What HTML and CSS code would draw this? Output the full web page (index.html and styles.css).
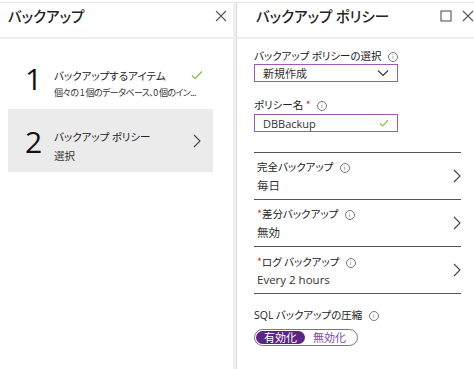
FILE: index.html
```html
<!DOCTYPE html>
<html lang="ja">
<head>
    <meta charset="UTF-8">
    <title>バックアップ</title>
    <link rel="stylesheet" href="styles.css">
</head>
<body>
    <div class="blade blade-left">
        <div class="blade-header">
            <span class="blade-title">バックアップ</span>
            <span class="header-icons">
                <svg width="12" height="12" viewBox="0 0 12 12"><path d="M1 1L11 11M11 1L1 11" stroke="#555" stroke-width="1.1" fill="none"/></svg>
            </span>
        </div>
        <div class="steps">
            <div class="step">
                <div class="step-num">1</div>
                <div class="step-text">
                    <div class="step-title">バックアップするアイテム</div>
                    <div class="step-sub long">個々の 1 個のデータベース、0 個のイン...</div>
                </div>
                <svg class="step-icon check" width="12" height="10" viewBox="0 0 12 10"><path d="M1 5.5L4.2 8.5L11 1.5" stroke="#7fba3a" stroke-width="1.1" fill="none"/></svg>
            </div>
            <div class="step active">
                <div class="step-num">2</div>
                <div class="step-text">
                    <div class="step-title">バックアップ ポリシー</div>
                    <div class="step-sub">選択</div>
                </div>
                <svg class="step-icon" width="8" height="14" viewBox="0 0 8 14"><path d="M1 1L7 7L1 13" stroke="#444" stroke-width="1.1" fill="none"/></svg>
            </div>
        </div>
    </div>
    <div class="gutter"></div>
    <div class="blade blade-right">
        <div class="blade-header">
            <span class="blade-title">バックアップ ポリシー</span>
            <span class="header-icons">
                <svg width="12" height="12" viewBox="0 0 12 12"><rect x="1" y="1" width="10" height="10" stroke="#555" stroke-width="1.1" fill="none"/></svg>
                <svg width="12" height="12" viewBox="0 0 12 12"><path d="M1 1L11 11M11 1L1 11" stroke="#555" stroke-width="1.1" fill="none"/></svg>
            </span>
        </div>
        <div class="form">
            <div class="field">
                <div class="label">バックアップ ポリシーの選択 <span class="info">i</span></div>
                <div class="box">
                    <span>新規作成</span>
                    <svg width="12" height="8" viewBox="0 0 12 8"><path d="M1 1.5L6 6.5L11 1.5" stroke="#333" stroke-width="1.1" fill="none"/></svg>
                </div>
            </div>
            <div class="field">
                <div class="label">ポリシー名 <span class="req">*</span> <span class="info">i</span></div>
                <div class="box">
                    <span class="latin">DBBackup</span>
                    <svg width="10" height="8" viewBox="0 0 10 8"><path d="M1 4.5L3.7 7L9 1.2" stroke="#7fba3a" stroke-width="1.1" fill="none"/></svg>
                </div>
            </div>
            <div class="rows">
                <div class="row">
                    <div>
                        <div class="row-title">完全バックアップ <span class="info">i</span></div>
                        <div class="row-value">毎日</div>
                    </div>
                    <svg width="8" height="14" viewBox="0 0 8 14"><path d="M1 1L7 7L1 13" stroke="#444" stroke-width="1.1" fill="none"/></svg>
                </div>
                <div class="row">
                    <div>
                        <div class="row-title"><span class="req">*</span>差分バックアップ <span class="info">i</span></div>
                        <div class="row-value">無効</div>
                    </div>
                    <svg width="8" height="14" viewBox="0 0 8 14"><path d="M1 1L7 7L1 13" stroke="#444" stroke-width="1.1" fill="none"/></svg>
                </div>
                <div class="row">
                    <div>
                        <div class="row-title"><span class="req">*</span>ログ バックアップ <span class="info">i</span></div>
                        <div class="row-value latin">Every 2 hours</div>
                    </div>
                    <svg width="8" height="14" viewBox="0 0 8 14"><path d="M1 1L7 7L1 13" stroke="#444" stroke-width="1.1" fill="none"/></svg>
                </div>
            </div>
            <div class="field compress">
                <div class="label"><span class="latin">SQL</span> バックアップの圧縮 <span class="info">i</span></div>
                <div class="toggle">
                    <span class="opt on">有効化</span>
                    <span class="opt">無効化</span>
                </div>
            </div>
        </div>
    </div>
</body>
</html>
```

FILE: styles.css
```css
body {
    margin: 0;
    padding-top: 2px;
    height: 367px;
    display: flex;
    font-family: "Noto Sans CJK JP", "Noto Sans", sans-serif;
    font-feature-settings: "palt";
    color: #222;
    background-color: #fff;
    overflow: hidden;
}
.latin {
    font-family: "Open Sans", "Noto Sans", sans-serif;
}
.blade {
    border-top: 1px solid #e2e2e2;
}
.blade-left {
    width: 233px;
}
.gutter {
    width: 3px;
    background-color: #efefef;
}
.blade-right {
    flex: 1;
    border-left: 1px solid #dcdcdc;
}
.blade-header {
    height: 32px;
    display: flex;
    align-items: flex-start;
    justify-content: space-between;
    padding: 2px 6px 0 8px;
    border-bottom: 2px solid #ececec;
}
.blade-right .blade-header {
    padding-left: 19px;
    padding-right: 0;
}
.blade-title {
    font-size: 14.5px;
    line-height: 22px;
    font-weight: 500;
}
.header-icons {
    display: flex;
    gap: 10px;
    align-items: center;
    height: 22px;
}
.header-icons svg {
    display: block;
}
.steps {
    padding-top: 7px;
}
.step {
    display: flex;
    align-items: center;
    height: 63px;
    margin: 0 20px 0 8px;
}
.step.active {
    background-color: #ebebeb;
}
.step-num {
    width: 46px;
    padding-left: 17px;
    padding-top: 2px;
    box-sizing: border-box;
    font-family: "Open Sans", sans-serif;
    font-size: 30px;
    line-height: 1;
    color: #111;
}
.step-text {
    flex: 1;
    min-width: 0;
    font-size: 10.5px;
    padding-top: 11px;
}
.step-title {
    margin-bottom: 3px;
}
.step.active .step-title {
    margin-bottom: 4px;
}
.step-sub {
    color: #333;
    white-space: nowrap;
}
.step-sub.long {
    font-size: 9px;
    letter-spacing: -0.6px;
}
.step-icon {
    margin-right: 12px;
    margin-left: 4px;
}
.step-icon.check {
    align-self: flex-start;
    margin-top: 24px;
    margin-left: -16px;
    margin-right: 10px;
}
.form {
    padding: 9px 0 0 17px;
    width: 207px;
}
.field {
    margin-bottom: 15px;
}
.label {
    font-size: 10.5px;
    height: 16px;
    line-height: 16px;
    color: #222;
}
.info {
    display: inline-block;
    width: 8px;
    height: 8px;
    border: 1px solid #777;
    border-radius: 50%;
    font-size: 6px;
    line-height: 8px;
    text-align: center;
    color: #777;
    margin-left: 4px;
    vertical-align: 1px;
    font-family: "DejaVu Sans", sans-serif;
}
.req {
    color: #c0392b;
}
.box {
    width: 126px;
    height: 16px;
    border: 1px solid #9a5ab8;
    display: flex;
    align-items: center;
    justify-content: space-between;
    padding: 0 8px 0 8px;
    font-size: 11px;
    color: #333;
}
.field + .field .box {
    margin-top: 1px;
}
.rows {
    margin-top: 20px;
    border-top: 1px solid #555;
}
.row {
    height: 46px;
    border-bottom: 1px solid #555;
    display: flex;
    align-items: center;
    justify-content: space-between;
    padding-left: 3px;
    padding-right: 0;
}
.row-title {
    font-size: 10.5px;
    margin-bottom: 3px;
}
.row-value {
    font-size: 11.5px;
    color: #333;
}
.compress {
    margin-top: 13px;
}
.toggle {
    display: inline-flex;
    margin-top: 2px;
    border: 1px solid #777;
    border-radius: 10px;
    padding: 1px;
    font-size: 11px;
}
.opt {
    padding: 0 10px 0 8px;
    line-height: 13px;
    border-radius: 8px;
    color: #7b4aa8;
}
.opt.on {
    background-color: #5c2485;
    color: #fff;
    padding: 0 8px;
}
```
